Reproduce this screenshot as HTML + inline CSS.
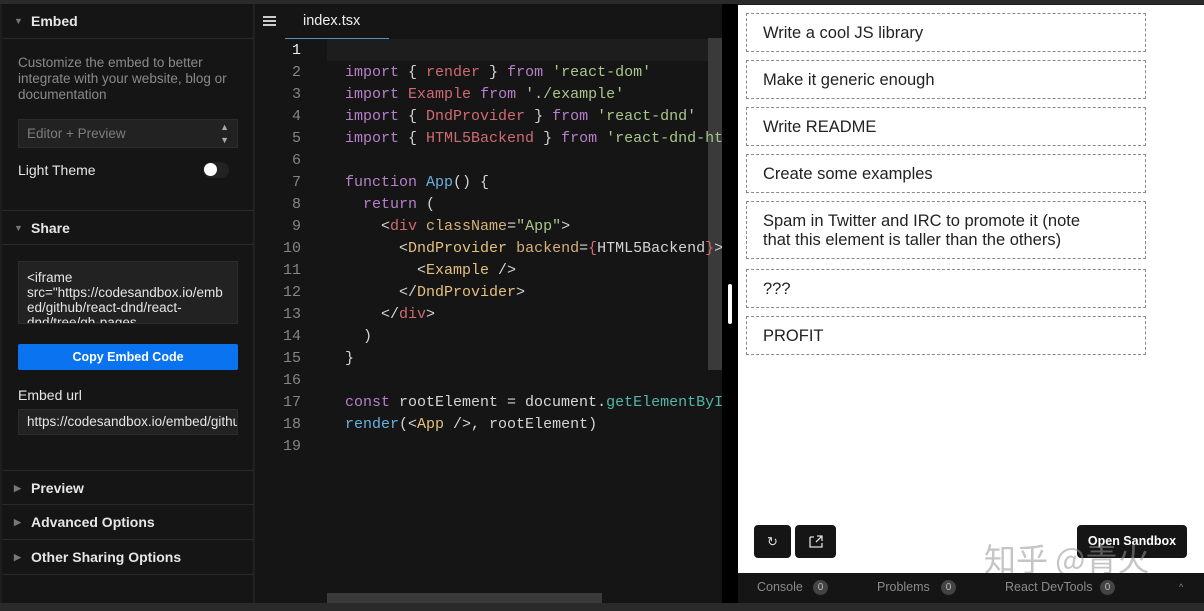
<!DOCTYPE html>
<html><head><meta charset="utf-8"><style>
*{margin:0;padding:0;box-sizing:border-box}
body{width:1204px;height:611px;background:#1e1e1e;position:relative;overflow:hidden;font-family:"Liberation Sans",sans-serif}
.abs{position:absolute}
#side{left:2px;top:4px;width:252px;height:599px;background:#151515;border-right:1px solid #242424}
.hdr{position:absolute;left:0;width:252px;height:35px;border-bottom:1px solid #2a2a2a;color:#e6e6e6;font-size:14px;font-weight:bold;padding-left:29px;line-height:35px}
.hdr .tri{position:absolute;left:12px;top:0;color:#777;font-size:9px}
.lbl{position:absolute;color:#e6e6e6;font-size:14px}
#editor{left:255px;top:4px;width:467px;height:599px;background:#151515}
.code{position:absolute;left:0;top:36px;width:467px;font-family:"Liberation Mono",monospace;font-size:15px;line-height:22px;color:#d4d4d4;white-space:pre}
.ln{position:absolute;left:0;width:46px;text-align:right;color:#858585}
.cl{position:absolute;left:90px}
.k{color:#b77fc9}.v{color:#cf6a72}.s{color:#a9c78a}.t{color:#e3c07e}.b{color:#6ab0de}.c{color:#52b6aa}.o{color:#d8d8d8}
#prev{left:738px;top:5px;width:466px;height:568px;background:#fff}
.card{position:absolute;left:8px;width:400px;border:1px dashed #8a8a8a;font-family:"Liberation Sans",sans-serif;font-size:16.5px;color:#222;padding:10px 40px 8px 16px;line-height:19px}
.btn{position:absolute;background:#151515;border-radius:4px}
</style></head><body>
<div class="abs" style="left:0;top:0;width:1204px;height:4px;background:#2a2a2a"></div>
<div id="side" class="abs">
  <div class="hdr" style="top:0"><span class="tri">▼</span>Embed</div>
  <div class="abs" style="left:16px;top:51px;width:225px;color:#8a8a8a;font-size:13.5px;line-height:16px">Customize the embed to better integrate with your website, blog or documentation</div>
  <div class="abs" style="left:16px;top:115px;width:220px;height:29px;background:#222;border:1px solid #2c2c2c;color:#7d7d7d;font-size:13.5px;line-height:27px;padding-left:8px">Editor + Preview<span style="position:absolute;right:8px;top:0;font-size:9px;color:#aaa;line-height:13px;padding-top:1px">▲<br>▼</span></div>
  <div class="lbl" style="left:16px;top:158px">Light Theme</div>
  <div class="abs" style="left:201px;top:158px;width:26px;height:16px;border-radius:8px;background:#222"></div>
  <div class="abs" style="left:202px;top:159px;width:13px;height:13px;border-radius:50%;background:#fff"></div>
  <div class="hdr" style="top:206px;border-top:1px solid #2a2a2a"><span class="tri">▼</span>Share</div>
  <div class="abs" style="left:16px;top:257px;width:220px;height:63px;background:#222;border:1px solid #2c2c2c;color:#e6e6e6;font-size:13.5px;line-height:15px;padding:8px 8px;overflow:hidden;overflow-wrap:anywhere">&lt;iframe src="https://codesandbox.io/embed/github/react-dnd/react-dnd/tree/gh-pages</div>
  <div class="abs" style="left:16px;top:340px;width:220px;height:26px;background:#0a74f0;border-radius:2px;color:#fff;font-size:12.5px;font-weight:bold;text-align:center;line-height:26px">Copy Embed Code</div>
  <div class="lbl" style="left:16px;top:383px">Embed url</div>
  <div class="abs" style="left:16px;top:405px;width:220px;height:26px;background:#222;border:1px solid #2c2c2c;color:#e6e6e6;font-size:13.5px;line-height:24px;padding-left:8px;white-space:nowrap;overflow:hidden">https://codesandbox.io/embed/github</div>
  <div class="hdr" style="top:466px;border-top:1px solid #2a2a2a"><span class="tri">▶</span>Preview</div>
  <div class="hdr" style="top:501px"><span class="tri">▶</span>Advanced Options</div>
  <div class="hdr" style="top:536px"><span class="tri">▶</span>Other Sharing Options</div>
</div>
<div id="editor" class="abs">
  <div class="abs" style="left:8px;top:12px;width:13px;height:2px;background:#ccc;box-shadow:0 4px 0 #ccc,0 8px 0 #ccc"></div>
  <div class="abs" style="left:48px;top:9px;color:#eee;font-size:14.5px">index.tsx</div>
  <div class="abs" style="left:30px;top:34px;width:104px;height:1px;background:#5a8fb8"></div>
  <div class="abs" style="left:72px;top:35px;width:381px;height:22px;background:#1d1d1d"></div>
  <div class="abs" style="left:453px;top:34px;width:14px;height:332px;background:#3a3a3a"></div>
  <div class="abs" style="left:72px;top:589px;width:275px;height:10px;background:#3a3a3a"></div>
  <div class="code">
<div class="ln" style="top:0;color:#eee">1</div>
<div class="ln" style="top:22px">2</div><div class="ln" style="top:44px">3</div><div class="ln" style="top:66px">4</div><div class="ln" style="top:88px">5</div><div class="ln" style="top:110px">6</div><div class="ln" style="top:132px">7</div><div class="ln" style="top:154px">8</div><div class="ln" style="top:176px">9</div><div class="ln" style="top:198px">10</div><div class="ln" style="top:220px">11</div><div class="ln" style="top:242px">12</div><div class="ln" style="top:264px">13</div><div class="ln" style="top:286px">14</div><div class="ln" style="top:308px">15</div><div class="ln" style="top:330px">16</div><div class="ln" style="top:352px">17</div><div class="ln" style="top:374px">18</div><div class="ln" style="top:396px">19</div>
<div class="cl" style="top:22px"><span class="k">import</span> { <span class="v">render</span> } <span class="k">from</span> <span class="s">'react-dom'</span></div>
<div class="cl" style="top:44px"><span class="k">import</span> <span class="v">Example</span> <span class="k">from</span> <span class="s">'./example'</span></div>
<div class="cl" style="top:66px"><span class="k">import</span> { <span class="v">DndProvider</span> } <span class="k">from</span> <span class="s">'react-dnd'</span></div>
<div class="cl" style="top:88px"><span class="k">import</span> { <span class="v">HTML5Backend</span> } <span class="k">from</span> <span class="s">'react-dnd-ht</span></div>
<div class="cl" style="top:132px"><span class="k">function</span> <span class="b">App</span>() {</div>
<div class="cl" style="top:154px">  <span class="k">return</span> (</div>
<div class="cl" style="top:176px">    &lt;<span class="v">div</span> <span class="t" style="color:#d6b07a">className</span>=<span class="s">"App"</span>&gt;</div>
<div class="cl" style="top:198px">      &lt;<span class="t">DndProvider</span> <span class="t" style="color:#d6b07a">backend</span>=<span class="v">{</span>HTML5Backend<span class="v">}</span>&gt;</div>
<div class="cl" style="top:220px">        &lt;<span class="t">Example</span> /&gt;</div>
<div class="cl" style="top:242px">      &lt;/<span class="t">DndProvider</span>&gt;</div>
<div class="cl" style="top:264px">    &lt;/<span class="v">div</span>&gt;</div>
<div class="cl" style="top:286px">  )</div>
<div class="cl" style="top:308px">}</div>
<div class="cl" style="top:352px"><span class="k">const</span> rootElement = <span class="o">document</span>.<span class="c">getElementById</span></div>
<div class="cl" style="top:374px"><span class="b">render</span>(&lt;<span class="t">App</span> /&gt;, rootElement)</div>
  </div>
</div>
<div class="abs" style="left:722px;top:4px;width:16px;height:599px;background:#000"></div>
<div class="abs" style="left:728px;top:284px;width:4px;height:40px;background:#fff;border-radius:2px"></div>
<div id="prev" class="abs">
  <div class="card" style="top:8px">Write a cool JS library</div>
  <div class="card" style="top:55px">Make it generic enough</div>
  <div class="card" style="top:102px">Write README</div>
  <div class="card" style="top:149px">Create some examples</div>
  <div class="card" style="top:196px">Spam in Twitter and IRC to promote it (note that this element is taller than the others)</div>
  <div class="card" style="top:264px">???</div>
  <div class="card" style="top:311px">PROFIT</div>
  <div class="btn" style="left:16px;top:520px;width:37px;height:33px;color:#ddd;font-size:13px;text-align:center;line-height:33px">↻</div>
  <div class="btn" style="left:57px;top:520px;width:41px;height:33px"><svg width="41" height="33"><path d="M15 12h4M15 12v10h12v-4M22 11h5v5M27 11l-6 6" stroke="#ddd" stroke-width="1.3" fill="none"/></svg></div>
  <div class="btn" style="left:339px;top:520px;width:110px;height:33px;color:#fff;font-size:12.5px;font-weight:bold;text-align:center;line-height:33px">Open Sandbox</div>
  <div class="abs" style="left:246px;top:530px;color:rgba(150,150,150,0.55);font-size:32px;font-family:'Noto Sans CJK SC',sans-serif">知乎 @青火</div>
</div>
<div class="abs" style="left:738px;top:573px;width:466px;height:30px;background:#151515;color:#8a8a8a;font-size:12.5px;line-height:28px">
  <span class="abs" style="left:19px">Console</span><span class="abs" style="left:75px;top:7px;width:15px;height:15px;border-radius:50%;background:#444;color:#bbb;font-size:10px;line-height:15px;text-align:center">0</span>
  <span class="abs" style="left:139px">Problems</span><span class="abs" style="left:203px;top:7px;width:15px;height:15px;border-radius:50%;background:#444;color:#bbb;font-size:10px;line-height:15px;text-align:center">0</span>
  <span class="abs" style="left:267px">React DevTools</span><span class="abs" style="left:362px;top:7px;width:15px;height:15px;border-radius:50%;background:#444;color:#bbb;font-size:10px;line-height:15px;text-align:center">0</span>
  <span class="abs" style="left:441px;font-size:9px">^</span>
</div>
<div class="abs" style="left:0;top:603px;width:1204px;height:8px;background:#2a2a2a"></div>
</body></html>
